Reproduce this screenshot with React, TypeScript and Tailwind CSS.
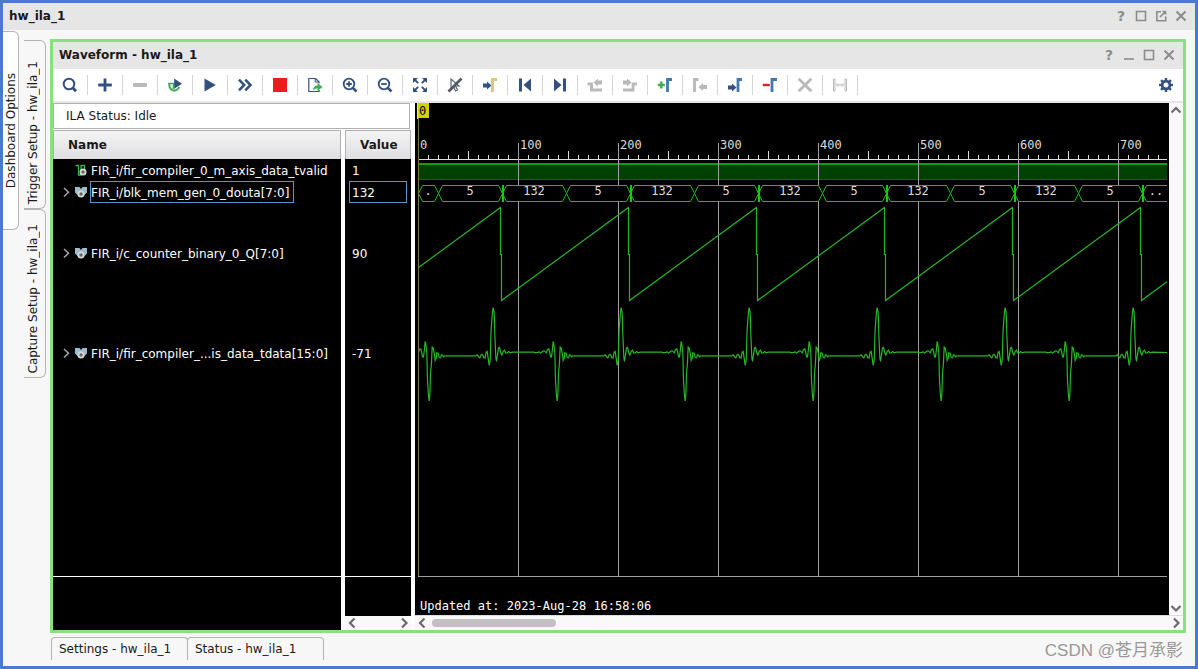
import { useState, type ReactNode } from "react";
import clsx from "clsx";

const NAVY = "#34507f";
const GREY = "#b9b9b9";
const BLUE = "#4179ad";
const GREEN = "#3fae4f";
const TRACE = "#27b627";

function Icon({ children, size = 16 }: { children: ReactNode; size?: number }) {
  return (
    <svg width={size} height={size} viewBox={`0 0 ${size} ${size}`} fill="none" aria-hidden="true">
      {children}
    </svg>
  );
}

const ARROW_RIGHT = "M0 2h4V0l4.500 4L4 8V6H0z";
const ARROW_LEFT = "M8.500 2h-4V0L0 4l4.500 4V6h4z";

const TOOLS: { label: string; disabled?: boolean; icon: ReactNode }[] = [
  {
    label: "Search",
    icon: (
      <g stroke={NAVY} strokeWidth="2">
        <circle cx="7" cy="7" r="5.300" />
        <path d="M10.500 10.500 14 14.300" strokeWidth="2.800" />
      </g>
    ),
  },
  { label: "Add", icon: <path d="M8 1.500v13M1.200 8h13.600" stroke={NAVY} strokeWidth="2.800" /> },
  { label: "Remove", disabled: true, icon: <path d="M1 8h14" stroke={GREY} strokeWidth="4" /> },
  {
    label: "Auto re-trigger",
    icon: (
      <>
        <path d="M2.600 6.800a4.900 4.900 0 1 0 9.600 3.200" stroke={GREEN} strokeWidth="2" />
        <path d="M1 6.500h5.500V12" stroke={GREEN} strokeWidth="1.600" />
        <path d="M7.200 1.500 15 6.700l-7.800 5z" fill={NAVY} />
      </>
    ),
  },
  { label: "Run trigger", icon: <path d="M2.500 1.500 13.800 8 2.500 14.500z" fill={NAVY} /> },
  { label: "Run immediate", icon: <path d="m2 2.700 5.200 5.300L2 13.300M8.300 2.700l5.200 5.300-5.200 5.300" stroke={NAVY} strokeWidth="2.500" /> },
  { label: "Stop", icon: <path d="M1 1h14v14H1z" fill="#ed1c1c" /> },
  {
    label: "Export data",
    icon: (
      <>
        <path d="M12 6.500V4.800L8.500 1.500H1.800v13H12V13" stroke={NAVY} strokeWidth="1.200" />
        <path d="M8.200 1.500V5H12" stroke={NAVY} />
        <path d="M6 13.500c.2-3.500 2-5 4.500-5V6l5 4-5 4v-2.600c-2 0-3.300.600-4.500 2.100z" fill={GREEN} />
      </>
    ),
  },
  {
    label: "Zoom in",
    icon: (
      <g stroke={NAVY} strokeWidth="1.800">
        <circle cx="7" cy="7" r="5.300" />
        <path d="M10.800 10.800 14.500 14.500" strokeWidth="2.600" />
        <path d="M7 4.200v5.600M4.200 7h5.600" />
      </g>
    ),
  },
  {
    label: "Zoom out",
    icon: (
      <g stroke={NAVY} strokeWidth="1.800">
        <circle cx="7" cy="7" r="5.300" />
        <path d="M10.800 10.800 14.500 14.500" strokeWidth="2.600" />
        <path d="M4.200 7h5.600" />
      </g>
    ),
  },
  {
    label: "Zoom fit",
    icon: (
      <>
        <path d="M1 1h5L1 6zM15 1v5l-5-5zM1 15v-5l5 5zM15 15h-5l5-5z" fill={NAVY} />
        <path d="m2.500 2.500 3.700 3.700M13.500 2.500 9.800 6.200M2.500 13.500l3.700-3.700M13.500 13.500 9.800 9.800" stroke={NAVY} strokeWidth="1.800" />
      </>
    ),
  },
  {
    label: "Cursor lock",
    icon: (
      <>
        <path d="M4 2v9.500l2.500-2 2 4.500 2-1-2-4H12z" stroke="#56677f" strokeWidth="1.200" />
        <path d="M14.500 1.500 1.500 14.500" stroke="#55595f" strokeWidth="2.600" />
      </>
    ),
  },
  {
    label: "Go to cursor",
    icon: (
      <>
        <path d={ARROW_RIGHT} transform="translate(1 4.500)" fill={NAVY} />
        <path d="M10.500 15V2.500H15" stroke="#e0c878" strokeWidth="3" />
      </>
    ),
  },
  { label: "Go to time 0", icon: <path d="M2 1.500h3v13H2zM14 1.500v13L6.500 8z" fill={NAVY} /> },
  { label: "Go to last time", icon: <path d="M11 1.500h3v13h-3zM2 1.500v13L9.500 8z" fill={NAVY} /> },
  {
    label: "Previous transition",
    disabled: true,
    icon: (
      <>
        <path d="M.5 7H4.500v6H15" stroke={GREY} strokeWidth="2.800" />
        <path d={ARROW_LEFT} transform="translate(6.500 1.500)" fill={GREY} />
      </>
    ),
  },
  {
    label: "Next transition",
    disabled: true,
    icon: (
      <>
        <path d="M1 13h10V7H15" stroke={GREY} strokeWidth="2.800" />
        <path d={ARROW_RIGHT} transform="translate(1 1.500)" fill={GREY} />
      </>
    ),
  },
  {
    label: "Add marker",
    icon: (
      <>
        <path d="M4.300 4.500v7M.8 8h7" stroke={GREEN} strokeWidth="2.400" />
        <path d="M10.500 15V2.500H15" stroke={BLUE} strokeWidth="2.800" />
      </>
    ),
  },
  {
    label: "Previous marker",
    disabled: true,
    icon: (
      <>
        <path d="M2.500 15V2.500H6.500" stroke={GREY} strokeWidth="2.800" />
        <path d={ARROW_LEFT} transform="translate(6.500 6)" fill={GREY} />
      </>
    ),
  },
  {
    label: "Next marker",
    icon: (
      <>
        <path d={ARROW_RIGHT} transform="translate(1 6.500)" fill={NAVY} />
        <path d="M11 15V2.500H15" stroke={BLUE} strokeWidth="2.800" />
      </>
    ),
  },
  {
    label: "Delete marker",
    icon: (
      <>
        <path d="M.8 8h7" stroke="#d8232f" strokeWidth="2.400" />
        <path d="M10 15V2.500H15" stroke={BLUE} strokeWidth="2.800" />
      </>
    ),
  },
  { label: "Delete all markers", disabled: true, icon: <path d="m1.700 1.700 12.600 12.600M14.300 1.700 1.700 14.300" stroke={GREY} strokeWidth="2.800" /> },
  {
    label: "Swap cursors",
    disabled: true,
    icon: (
      <g stroke={GREY}>
        <path d="M1.500 2h1.500v12H1.500zM13 2h1.500v12H13z" />
        <path d="M4.500 8h7M6.300 6.300 4.600 8l1.700 1.700M9.700 6.300 11.400 8 9.700 9.700" />
      </g>
    ),
  },
];

const SIGNALS = [
  { name: "FIR_i/fir_compiler_0_m_axis_data_tvalid", value: "1", bus: false, analog: false },
  { name: "FIR_i/blk_mem_gen_0_douta[7:0]", value: "132", bus: true, analog: false },
  { name: "FIR_i/c_counter_binary_0_Q[7:0]", value: "90", bus: true, analog: true },
  { name: "FIR_i/fir_compiler_...is_data_tdata[15:0]", value: "-71", bus: true, analog: true },
];

const GEAR_TEETH = [0, 45, 90, 135, 180, 225, 270, 315];

// one period of the filter output, three units to a pixel
const FIR_PERIOD = [
  [0, 170], [3, 162], [7, 160], [10, 173], [12, 184], [15, 184], [17, 168], [20, 138], [22, 145], [25, 175],
  [27, 255], [30, 300], [32, 316], [34, 300], [36, 235], [39, 200], [41, 155], [44, 158], [48, 178], [50, 195],
  [53, 188], [55, 172], [59, 173], [62, 186], [66, 187], [69, 178], [72, 179], [75, 184], [79, 181],
  [172, 181], [177, 178], [180, 184], [184, 187], [188, 178], [192, 177], [196, 187], [200, 187], [203, 170],
  [206, 168], [209, 188], [212, 210], [215, 195], [218, 100], [222, 48], [224, 36], [227, 52], [229, 118],
  [232, 185], [234, 198], [237, 178], [240, 158], [243, 156], [247, 172], [250, 179], [254, 168], [258, 164],
  [262, 173], [266, 172], [270, 168], [275, 172], [282, 170], [346, 170], [352, 172], [362, 169], [367, 173],
  [373, 167], [378, 167], [383, 172],
];

const PERIOD = 128;
const END = 749;
const PERIODS = [0, 1, 2, 3, 4, 5];

const firPoints = PERIODS.flatMap((p) =>
  FIR_PERIOD.map(([x, y]) => [x / 3 + p * PERIOD, y / 3 + 192]).filter(([x]) => x <= END)
)
  .concat([[END, 249]])
  .map((pt) => pt.join(","))
  .join(" ");

const counterPoints =
  "0,164 " +
  PERIODS.map((p) => {
    const x = 82 + p * PERIOD;
    return `${x},104 ${x},151 ${x + 1},151 ${x + 1},197`;
  }).join(" ") +
  " 749,178";

function busSegments() {
  const list = [{ from: 0, to: 20, text: "." }];
  for (let x = 20, i = 0; x < 724; x += 64, i++) {
    list.push({ from: x, to: x + 64, text: i % 2 ? "132" : "5" });
  }
  list.push({ from: 724, to: 762, text: ".." });
  return list;
}

function Waveform() {
  return (
    <svg className="block h-full w-full font-['DejaVu_Sans_Mono',monospace] text-xs" role="img" aria-label="Waveform">
      <svg x="0" y="0" width="752" height="100%">
        <g transform="translate(3 0)" shapeRendering="crispEdges">
          {Array.from({ length: 74 }, (_, i) => (i + 1) * 10).map((x) => (
            <rect key={x} x={x} y={x % 50 ? 52 : 48} width="1" height={x % 50 ? 5 : 9} fill="#ddd" />
          ))}
          <rect x="0" y="56" width={END} height="1" fill="#ddd" />

          <rect x="0" y="60" width={END} height="17" fill="#004000" />
          <path d={`M0 76.500H${END}`} stroke="#0a6a0a" />
          <path d={`M0 61H${END}`} stroke="#159a15" strokeWidth="2" />
        </g>

        <svg x="3" y="0" width={END} height="100%">
          {[100, 200, 300, 400, 500, 600, 700].map((x) => (
            <g key={x}>
              <rect x={x} y="40" width="1" height="100%" fill="#a0a0a0" shapeRendering="crispEdges" />
              <text x={x + 2} y="46" fill="#ddd">{x}</text>
            </g>
          ))}
          <text x="2" y="46" fill="#ddd">0</text>

          {busSegments().map(({ from, to, text }) => (
            <g key={from}>
              <path
                d={`M${from} 90 ${from + 4} 82H${to - 4}L${to} 90 ${to - 4} 98H${from + 4}Z`}
                transform="translate(.5 .5)"
                fill="#000"
                stroke={TRACE}
              />
              <text x={text === ".." ? 738 : (from + to) / 2} y="92" fill="#ddd" textAnchor="middle">{text}</text>
            </g>
          ))}
          {PERIODS.map((p) => (
            <rect key={p} x={84 + p * PERIOD} y="82" width="2" height="17" fill="#14c814" />
          ))}

          <g fill="none" stroke={TRACE} transform="translate(.5 .5)">
            <polyline points={counterPoints} strokeWidth="1.200" />
            <polyline points={firPoints} strokeWidth="1.200" />
          </g>
        </svg>

        <rect x="3" y="0" width="1" height="100%" fill="#77773a" />
        <rect x="2" y="0" width="1" height="16" fill="#ddd" />
        <rect x="3" y="0" width="11" height="15" fill="#d2d200" />
        <text x="4" y="12" fill="#000">0</text>
      </svg>
    </svg>
  );
}

function WindowControls({ kinds }: { kinds: string[] }) {
  return (
    <div className="ml-auto flex pr-1">
      {kinds.map((kind) => (
        <button key={kind} type="button" aria-label={kind} className="grid size-5 place-items-center text-sm font-bold text-[#8c8c8c]">
          {kind === "help" && "?"}
          {kind !== "help" && (
            <Icon size={12}>
              <g stroke="#8c8c8c" strokeWidth="1.600">
                {kind === "minimize" && <path d="M1 10h10" />}
                {kind === "maximize" && <path d="M1.500 1.500h9v9h-9z" />}
                {kind === "float" && <path d="M6 1.800H1.800v8.900h8.900V6.500M5 7l5.500-5.500M7.500 1.500h3v3" />}
                {kind === "close" && <path d="m1.500 1.500 9 9M10.500 1.500l-9 9" strokeWidth="2" />}
              </g>
            </Icon>
          )}
        </button>
      ))}
    </div>
  );
}

const CHEVRONS = {
  left: "M8.500 1.500 4 6 8.500 10.500",
  right: "M4 1.500 8.500 6 4 10.500",
  up: "M1.500 8.500 6 4 10.500 8.500",
  down: "M1.500 4 6 8.500 10.500 4",
};

function ScrollButton({ dir }: { dir: keyof typeof CHEVRONS }) {
  return (
    <button type="button" aria-label={`Scroll ${dir}`} className="grid size-3.5 shrink-0 place-items-center">
      <Icon size={12}>
        <path d={CHEVRONS[dir]} stroke="#6b6b6b" strokeWidth="2.200" />
      </Icon>
    </button>
  );
}

function SignalIcon({ bus }: { bus: boolean }) {
  return (
    <Icon size={12}>
      {bus ? (
        <path d="M0 1h4.500L6 3l1.500-2H12v5.500L9 9.500H3L0 6.500z" fill="#9dbccb" />
      ) : (
        <path d="M.5 1.500H3.500v9.500H6V1.500h3.500V6" stroke="#36b355" strokeWidth="1.300" />
      )}
      <circle cx={bus ? 6 : 8} cy="8" r="2.600" fill="#666" stroke="#d6d6d6" strokeWidth="1.800" />
    </Icon>
  );
}

function SideTab({ children }: { children: string }) {
  return (
    <button type="button" className="flex h-[169px] w-[22px] items-end justify-center rounded-r-md border-y border-r border-[#b4b4b4] pr-[3px] pb-1">
      <span className="rotate-180 whitespace-nowrap [writing-mode:vertical-rl]">{children}</span>
    </button>
  );
}

export default function App() {
  const [selected, setSelected] = useState(1);
  const headCell = "h-[29px] border border-b-0 border-[#b0b0b0] bg-linear-to-b from-[#f4f4f4] to-[#dfdfe2] pl-3.5 text-left font-bold text-[#1a1a1a]";

  return (
    <div className="flex h-screen flex-col overflow-hidden border-3 border-[#4a7acb] bg-[#f7f7f7] font-['DejaVu_Sans',sans-serif] text-xs text-[#1a1a1a]">
      <header className="flex h-[27px] shrink-0 items-center bg-[#e6e6e6] pb-0.5 pl-1.5">
        <h1 className="font-bold">hw_ila_1</h1>
        <WindowControls kinds={["help", "maximize", "float", "close"]} />
      </header>

      <div className="flex min-h-0 flex-1">
        <nav aria-label="Dashboard" className="flex shrink-0 pr-1">
          <button type="button" className="mt-px mr-[5px] flex h-[199px] w-4 items-center justify-center rounded-r-md border-y border-r border-[#b4b4b4] bg-white">
            <span className="rotate-180 whitespace-nowrap [writing-mode:vertical-rl]">Dashboard Options</span>
          </button>
          <div className="mt-2.5 flex flex-col">
            <SideTab>Trigger Setup - hw_ila_1</SideTab>
            <SideTab>Capture Setup - hw_ila_1</SideTab>
          </div>
        </nav>

        <main className="mt-[9px] mr-[9px] flex min-w-0 flex-1 flex-col border-3 border-[#88e07f] bg-white">
          <div className="flex h-[27px] shrink-0 items-center bg-[#e6e6e6] pb-0.5 pl-1.5">
            <h2 className="font-bold">Waveform - hw_ila_1</h2>
            <WindowControls kinds={["help", "minimize", "maximize", "close"]} />
          </div>

          <div role="toolbar" className="flex h-[34px] shrink-0 items-center border-b-2 border-[#e6e6e6]">
            {TOOLS.map((tool) => (
              <button
                key={tool.label}
                type="button"
                aria-label={tool.label}
                disabled={tool.disabled}
                className="grid h-5 w-[35px] place-items-center border-r border-[#d4d4d4]"
              >
                <Icon>{tool.icon}</Icon>
              </button>
            ))}
            <button type="button" aria-label="Settings" className="ml-auto grid h-5 w-[35px] place-items-center">
              <Icon>
                <circle cx="8" cy="8" r="3.900" stroke={NAVY} strokeWidth="2.800" />
                {GEAR_TEETH.map((a) => (
                  <path key={a} d="M6.800 1h2.400v3H6.800z" fill={NAVY} transform={`rotate(${a} 8 8)`} />
                ))}
              </Icon>
            </button>
          </div>

          <div className="flex min-h-0 flex-1 gap-1">
            <section className="flex w-[358px] shrink-0 flex-col gap-px">
              <div className="mr-px flex h-[26px] shrink-0 items-center border border-[#b0b0b0] pl-3">ILA Status: Idle</div>

              <div className="flex min-h-0 flex-1 gap-1">
                <div className="flex min-w-0 flex-1 flex-col bg-black text-white">
                  <div className="min-h-0 flex-1 border-b border-white">
                    <table className="w-full border-separate border-spacing-0">
                      <thead>
                        <tr>
                          <th className={headCell}>Name</th>
                        </tr>
                      </thead>
                      <tbody>
                        {SIGNALS.map((s, i) => (
                          <tr key={s.name} onClick={() => setSelected(i)}>
                            <td className={clsx("p-0", s.analog ? "h-[100px]" : "h-[22px]")}>
                              <div className="flex items-center gap-[3px] pl-[7px]">
                                {s.bus ? (
                                  <button type="button" aria-label={`Expand ${s.name}`} className="w-3">
                                    <Icon size={12}>
                                      <path d="m4 2 4.500 4.200L4 10.500" stroke="#a8a8a8" strokeWidth="1.500" />
                                    </Icon>
                                  </button>
                                ) : (
                                  <span className="w-3" />
                                )}
                                <SignalIcon bus={s.bus} />
                                <span className={clsx("h-[22px] border pt-px pr-1 leading-5 whitespace-nowrap", i === selected ? "border-[#5b93cc]" : "border-transparent")}>
                                  {s.name}
                                </span>
                              </div>
                            </td>
                          </tr>
                        ))}
                      </tbody>
                    </table>
                  </div>
                  <div className="h-[53px] shrink-0" />
                </div>

                <div className="flex w-[66px] flex-col bg-black text-white">
                  <div className="min-h-0 flex-1 border-b border-white">
                    <table className="w-full border-separate border-spacing-0">
                      <thead>
                        <tr>
                          <th className={headCell}>Value</th>
                        </tr>
                      </thead>
                      <tbody>
                        {SIGNALS.map((s, i) => (
                          <tr key={s.name} onClick={() => setSelected(i)}>
                            <td className={clsx("px-1 py-0", s.analog ? "h-[100px]" : "h-[22px]")}>
                              <div className={clsx("h-[22px] border pt-px pl-0.5 leading-5", i === selected ? "border-[#5b93cc]" : "border-transparent")}>{s.value}</div>
                            </td>
                          </tr>
                        ))}
                      </tbody>
                    </table>
                  </div>
                  <div className="h-[39px] shrink-0" />
                  <div className="flex h-3.5 shrink-0 justify-between bg-[#f9f9f9]">
                    <ScrollButton dir="left" />
                    <ScrollButton dir="right" />
                  </div>
                </div>
              </div>
            </section>

            <section className="flex min-w-0 flex-1 flex-col">
              <div className="flex min-h-0 flex-1">
                <div className="flex min-w-0 flex-1 flex-col bg-black">
                  <div className="min-h-0 flex-1">
                    <Waveform />
                  </div>
                  <div className="mr-0.5 ml-[3px] h-[39px] shrink-0 border-t border-[#a0a0a0] pt-[21px] pl-0.5 font-['DejaVu_Sans_Mono',monospace] text-white">
                    Updated at: 2023-Aug-28 16:58:06
                  </div>
                </div>
                <div className="flex w-3.5 shrink-0 flex-col justify-between bg-[#f9f9f9]">
                  <ScrollButton dir="up" />
                  <ScrollButton dir="down" />
                </div>
              </div>
              <div className="flex h-[15px] shrink-0 items-center border-t border-[#dcdcdc] bg-[#f9f9f9]">
                <ScrollButton dir="left" />
                <div className="ml-[3px] h-2 w-[124px] rounded-full bg-[#c1c1c1]" />
                <div className="flex-1" />
                <ScrollButton dir="right" />
              </div>
            </section>
          </div>
        </main>
      </div>

      <footer className="flex h-[33px] shrink-0 pt-1 pr-3 pl-12">
        <button type="button" className="h-[23px] w-[137px] rounded-t border border-b-0 border-[#b4b4b4] pl-[7px] text-left">
          Settings - hw_ila_1
        </button>
        <button type="button" className="-ml-px h-[23px] w-[137px] rounded-t border border-b-0 border-[#b4b4b4] pl-[7px] text-left">
          Status - hw_ila_1
        </button>
        <p className="ml-auto font-['Liberation_Sans','Noto_Sans_CJK_SC',sans-serif] text-[17px] leading-7 whitespace-nowrap text-[#999]">CSDN @苍月承影</p>
      </footer>
    </div>
  );
}
